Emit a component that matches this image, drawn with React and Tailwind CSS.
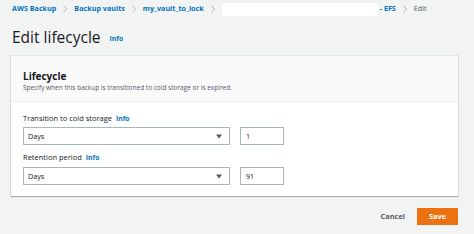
import React from "react";

function Chevron() {
  return (
    <svg width="4" height="8" viewBox="0 0 4 8" className="mx-[7px] shrink-0">
      <path d="M0.5 0.5 L3.5 4 L0.5 7.5" fill="none" stroke="#aab7b8" strokeWidth="0.9" />
    </svg>
  );
}

function Info() {
  return <span className="text-[6.8px] font-bold text-[#0073bb] ml-[4px]">Info</span>;
}

function Select({ value }) {
  return (
    <div className="w-[207px] h-[18px] border border-[#aab7b8] bg-white flex items-center justify-between pl-[4px] pr-[7px]">
      <span className="text-[7.2px] text-[#16191f]">{value}</span>
      <svg width="6" height="5" viewBox="0 0 6 5">
        <path d="M0 0.5 L6 0.5 L3 4.5 Z" fill="#545b64" />
      </svg>
    </div>
  );
}

function Input({ value }) {
  return (
    <div className="w-[44px] h-[18px] border border-[#aab7b8] bg-white flex items-center pl-[5px] ml-[10px]">
      <span className="text-[7.2px] text-[#16191f]">{value}</span>
    </div>
  );
}

export default function App() {
  return (
    <div className="w-[474px] h-[234px] bg-[#f2f3f3] overflow-hidden font-['Open_Sans',sans-serif] text-[#16191f]">
      <div className="h-[18px] flex items-center pl-[12px] text-[7.2px] font-bold text-[#0073bb] leading-none">
        <span>AWS Backup</span>
        <Chevron />
        <span>Backup vaults</span>
        <Chevron />
        <span>my_vault_to_lock</span>
        <Chevron />
        <span className="w-[156px] h-[13px] bg-white mr-[2px]" />
        <span>- EFS</span>
        <Chevron />
        <span className="text-[#545b64] font-normal">Edit</span>
      </div>
      <div className="h-[38px] flex items-center pl-[12px] pt-[1px]">
        <span className="text-[15.5px] leading-none">Edit lifecycle</span>
        <span className="text-[6.8px] font-bold text-[#0073bb] ml-[9px] mt-[4px]">Info</span>
      </div>
      <div className="ml-[11px] w-[447px] bg-white shadow-[0_1px_1px_rgba(0,0,0,0.25),0_0_0_1px_rgba(0,0,0,0.06)]">
        <div className="h-[46px] bg-[#fafafa] border-b border-[#eaeded] px-[12px] pt-[14px]">
          <div className="text-[10px] font-bold leading-[13px]">Lifecycle</div>
          <div className="text-[6.5px] leading-[10px] text-[#545b64]">
            Specify when this backup is transitioned to cold storage or is expired.
          </div>
        </div>
        <div className="px-[12px] pt-[12px] pb-[11px]">
          <div className="h-[10px] flex items-center text-[7.5px] leading-none">
            <span>Transition to cold storage</span>
            <Info />
          </div>
          <div className="flex mt-[3px]">
            <Select value="Days" />
            <Input value="1" />
          </div>
          <div className="h-[10px] flex items-center text-[7.5px] leading-none mt-[8px]">
            <span>Retention period</span>
            <Info />
          </div>
          <div className="flex mt-[4px]">
            <Select value="Days" />
            <Input value="91" />
          </div>
        </div>
      </div>
      <div className="flex items-center justify-end w-[458px] mt-[12px]">
        <span className="text-[7.4px] font-bold text-[#545b64] mr-[12px]">Cancel</span>
        <div className="w-[41px] h-[17px] bg-[#ec7211] flex items-center justify-center">
          <span className="text-[7.4px] font-bold text-white">Save</span>
        </div>
      </div>
    </div>
  );
}
